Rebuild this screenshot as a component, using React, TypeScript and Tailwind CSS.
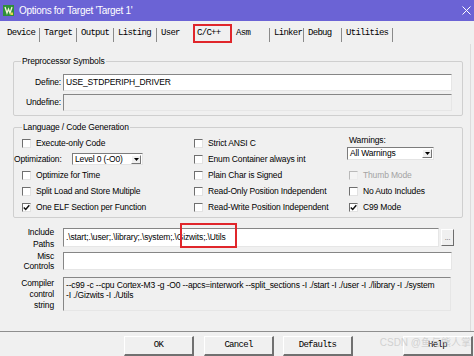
import React from "react";

type Tab = { label: string; width: string; sep: boolean; active?: boolean };

const tabs: Tab[] = [
  { label: "Device", width: "w-[37px]", sep: true },
  { label: "Target", width: "w-[37px]", sep: true },
  { label: "Output", width: "w-[37px]", sep: true },
  { label: "Listing", width: "w-[43px]", sep: true },
  { label: "User", width: "w-[36px]", sep: false },
  { label: "C/C++", width: "w-[39px]", sep: false, active: true },
  { label: "Asm", width: "w-[38px]", sep: true },
  { label: "Linker", width: "w-[34px]", sep: true },
  { label: "Debug", width: "w-[38px]", sep: true },
  { label: "Utilities", width: "w-[51px]", sep: true },
];

function KeilIcon() {
  return (
    <svg width="11" height="11" viewBox="0 0 11 11">
      <rect x="0" y="0" width="11" height="11" fill="#2f8f3a" />
      <path d="M2 2 L4 8 L5.5 4 L7 8 L9 2" fill="none" stroke="#f4f4d8" strokeWidth="1.3" />
      <rect x="7.5" y="7.5" width="2.5" height="2.5" fill="#e7d84a" />
    </svg>
  );
}

function Check({ checked, disabled }: { checked?: boolean; disabled?: boolean }) {
  return (
    <span
      className={
        disabled
          ? "flex h-[9px] w-[9px] shrink-0 items-center justify-center border border-[#b9b9b9] border-r-[#ececec] border-b-[#ececec] bg-[#f4f4f4]"
          : "flex h-[9px] w-[9px] shrink-0 items-center justify-center border border-[#6f6f6f] border-r-[#e2e2e2] border-b-[#e2e2e2] bg-white"
      }
    >
      {checked && (
        <svg width="7" height="7" viewBox="0 0 7 7">
          <path d="M0.8 3.4 L2.7 5.4 L6.3 1.2" fill="none" stroke="#111" strokeWidth="1.5" />
        </svg>
      )}
    </span>
  );
}

function CheckRow({
  label,
  checked,
  disabled,
  className = "",
}: {
  label: string;
  checked?: boolean;
  disabled?: boolean;
  className?: string;
}) {
  return (
    <div className={"flex h-[16px] items-center gap-[5px] " + className}>
      <Check checked={checked} disabled={disabled} />
      <span className={disabled ? "text-[#a3a3a3]" : ""}>{label}</span>
    </div>
  );
}

function Select({ value, className }: { value: string; className: string }) {
  return (
    <div
      className={
        "flex items-center border border-[#7c7c7c] border-r-[#e4e4e4] border-b-[#e4e4e4] bg-white pl-[2px] pr-[1px] " +
        className
      }
    >
      <span className="flex-1 whitespace-nowrap">{value}</span>
      <span className="flex h-[9px] w-[10px] items-center justify-center border border-white border-r-[#777] border-b-[#777] bg-[#f0f0f0]">
        <svg width="5" height="3" viewBox="0 0 5 3">
          <path d="M0 0 H5 L2.5 3 Z" fill="#000" />
        </svg>
      </span>
    </div>
  );
}

const sunken = "border border-[#868686] border-r-[#e6e6e6] border-b-[#e6e6e6]";

export default function App() {
  return (
    <div className="relative flex h-[356px] w-[474px] flex-col overflow-hidden bg-[#f0f0f0] font-['Liberation_Sans',Arial,sans-serif] text-[8.5px] tracking-[-0.15px] text-black">
      {/* title bar */}
      <div className="flex h-[21px] shrink-0 items-center bg-[#6b63d5] pl-[3px] pr-[3px]">
        <KeilIcon />
        <span className="ml-[5px] text-[10px] tracking-[-0.3px] text-white">
          Options for Target 'Target 1'
        </span>
        <svg className="ml-auto" width="9" height="9" viewBox="0 0 9 9">
          <path d="M0.5 0.5 L8.5 8.5 M8.5 0.5 L0.5 8.5" stroke="#fff" strokeWidth="1" />
        </svg>
      </div>

      {/* tabs */}
      <div className="flex h-[23px] shrink-0 items-start pl-[3px] pt-[3px] font-['Liberation_Mono',monospace] text-[9px] tracking-[-0.7px]">
        {tabs.map((t) => (
          <div
            key={t.label}
            className={
              t.active
                ? "flex h-[19px] shrink-0 items-center border-2 border-[#e0262b] pl-[2px] " + t.width
                : "flex h-[19px] shrink-0 items-center justify-between pl-[4px] " + t.width
            }
          >
            <span>{t.label}</span>
            {t.sep && <span className="mt-[2px] h-[14px] w-px bg-[#8a8a8a]" />}
          </div>
        ))}
      </div>

      {/* tab page */}
      <div className="mr-[3px] h-[287px] shrink-0 border-r border-[#dcdcdc]">
        <fieldset className="ml-[13px] mt-[12px] w-[450px] rounded-[2px] border border-[#cfcfcf] pb-[4px]">
          <legend className="ml-[7px] px-[1px] leading-[10px]">Preprocessor Symbols</legend>
          <div className="mt-[8px] flex items-center">
            <span className="w-[47px] text-right">Define:</span>
            <div className={"ml-[2px] flex h-[17px] w-[389px] items-center bg-white pl-[2px] " + sunken}>
              USE_STDPERIPH_DRIVER
            </div>
          </div>
          <div className="mt-[3px] flex items-center">
            <span className="w-[47px] text-right">Undefine:</span>
            <div className={"ml-[2px] h-[17px] w-[389px] bg-[#f0f0f0] " + sunken} />
          </div>
        </fieldset>

        <fieldset className="ml-[13px] mt-[6px] w-[450px] rounded-[2px] border border-[#cfcfcf] pb-[2px]">
          <legend className="ml-[8px] px-[1px] leading-[10px]">Language / Code Generation</legend>
          <div className="mt-[3px] flex">
            <div className="flex w-[180px] flex-col">
              <CheckRow label="Execute-only Code" className="pl-[8px]" />
              <div className="flex h-[16px] items-center">
                <span className="w-[58px]">Optimization:</span>
                <Select value="Level 0 (-O0)" className="h-[12px] w-[71px]" />
              </div>
              <CheckRow label="Optimize for Time" className="pl-[8px]" />
              <CheckRow label="Split Load and Store Multiple" className="pl-[8px]" />
              <CheckRow label="One ELF Section per Function" checked className="pl-[8px]" />
            </div>
            <div className="flex w-[153px] flex-col">
              <CheckRow label="Strict ANSI C" />
              <CheckRow label="Enum Container always int" />
              <CheckRow label="Plain Char is Signed" />
              <CheckRow label="Read-Only Position Independent" />
              <CheckRow label="Read-Write Position Independent" />
            </div>
            <div className="flex flex-col">
              <span className="pl-[2px] leading-[10px]">Warnings:</span>
              <Select value="All Warnings" className="mt-[2px] h-[13px] w-[87px]" />
              <CheckRow label="Thumb Mode" disabled className="mt-[7px] pl-[2px]" />
              <CheckRow label="No Auto Includes" className="pl-[2px]" />
              <CheckRow label="C99 Mode" checked className="pl-[2px]" />
            </div>
          </div>
        </fieldset>

        <div className="ml-[13px] mt-[10px] flex h-[19px] items-center">
          <div className="w-[41px] text-right leading-[12px]">
            Include
            <br />
            Paths
          </div>
          <div className={"relative ml-[9px] flex h-[19px] w-[376px] items-center bg-white pl-[2px] " + sunken}>
            <span className="whitespace-nowrap">.\start;.\user;.\library;.\system;.\Gizwits;.\Utils</span>
            <span className="absolute left-[116px] top-[-6px] h-[25px] w-[57px] border-2 border-[#e0262b]" />
          </div>
          <div className="ml-[2px] flex h-[17px] w-[13px] items-center justify-center border border-white border-r-[#6d6d6d] border-b-[#6d6d6d] text-[7px] leading-none text-[#555]">
            ...
          </div>
        </div>

        <div className="ml-[13px] mt-[5px] flex h-[18px] items-center">
          <div className="w-[41px] text-right leading-[10px]">
            Misc
            <br />
            Controls
          </div>
          <div className={"ml-[9px] h-[18px] w-[389px] bg-white " + sunken} />
        </div>

        <div className="ml-[13px] mt-[7px] flex h-[34px] items-center">
          <div className="w-[41px] text-right leading-[11px]">
            Compiler
            <br />
            control
            <br />
            string
          </div>
          <div className={"ml-[9px] h-[34px] w-[388px] bg-[#f0f0f0] pl-[2px] pt-[2px] leading-[10px] " + sunken}>
            <div className="whitespace-nowrap">
              --c99 -c --cpu Cortex-M3 -g -O0 --apcs=interwork --split_sections -I ./start -I ./user -I ./library -I ./system
            </div>
            <div className="whitespace-nowrap">-I ./Gizwits -I ./Utils</div>
          </div>
        </div>
      </div>

      {/* separator */}
      <div className="h-px shrink-0 bg-[#8e8e8e]" />

      {/* buttons */}
      <div className="flex h-[24px] shrink-0 items-start pt-[4px] font-['Liberation_Mono',monospace] text-[9px] tracking-[-0.7px]">
        <button className="ml-[124px] flex h-[20px] w-[70px] items-center justify-center border-t border-l border-r-2 border-b-2 border-t-white border-l-white border-r-[#707070] border-b-[#707070]">
          OK
        </button>
        <button className="ml-[10px] flex h-[20px] w-[70px] items-center justify-center border-t border-l border-r-2 border-b-2 border-t-white border-l-white border-r-[#707070] border-b-[#707070]">
          Cancel
        </button>
        <button className="ml-[9px] flex h-[20px] w-[70px] items-center justify-center border-t border-l border-r-2 border-b-2 border-t-white border-l-white border-r-[#707070] border-b-[#707070]">
          Defaults
        </button>
        <button className="ml-[50px] flex h-[20px] w-[70px] items-center justify-center border-t border-l border-r-2 border-b-2 border-t-white border-l-white border-r-[#707070] border-b-[#707070]">
          Help
        </button>
      </div>

      {/* watermark */}
      <span className="pointer-events-none absolute bottom-[6px] right-[3px] font-['Liberation_Sans','Noto_Sans_CJK_SC',sans-serif] text-[10px] tracking-normal text-[#c9c9c9]/80">
        CSDN @鱼与熊人掌
      </span>
    </div>
  );
}
